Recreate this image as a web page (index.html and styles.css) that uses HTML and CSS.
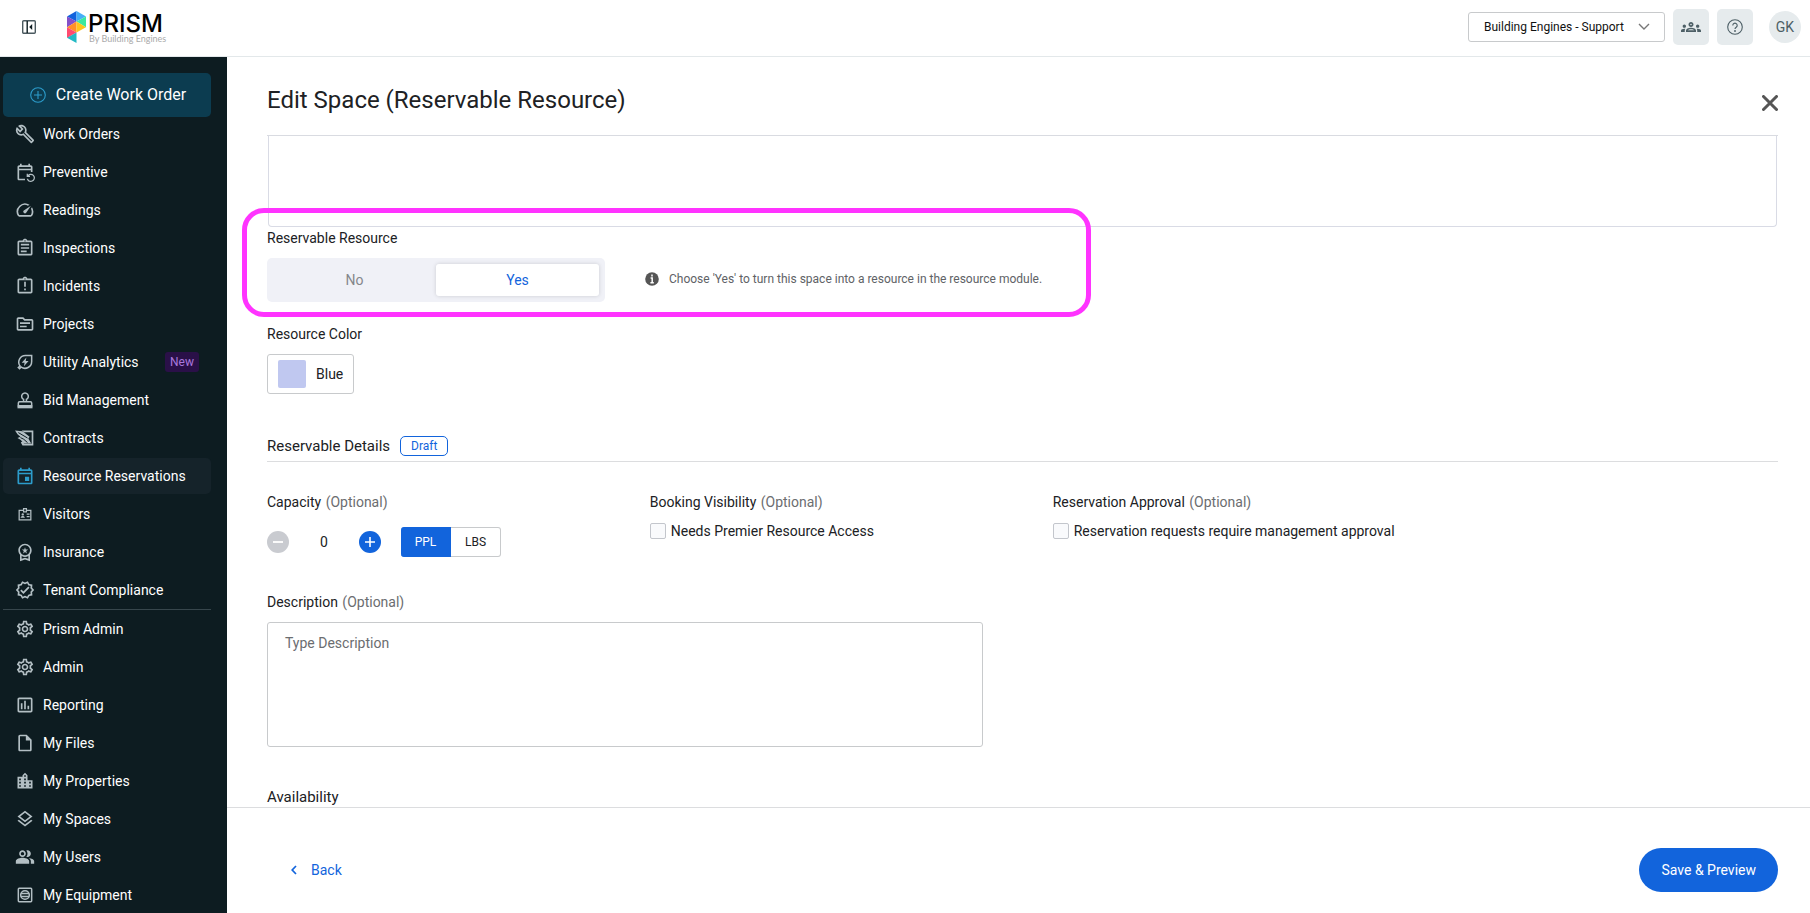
FILE: index.html
```html
<!DOCTYPE html>
<html lang="en">
<head>
  <meta charset="UTF-8" />
  <meta name="viewport" content="width=device-width, initial-scale=1" />
  <title>Prism - Edit Space</title>
  <link rel="stylesheet" href="styles.css">
</head>
<body>

  <header class="topbar">
    <button class="collapse-btn" aria-label="Collapse menu">
      <svg width="14" height="14" viewBox="0 0 14 14" fill="none" stroke="#4b5a60" stroke-width="1.4"><rect x=".7" y=".7" width="12.6" height="12.6" rx="1"/><path d="M5.2 1v12" stroke="#0d1c21"/><path d="M10.2 4v6L7.2 7z" fill="#0d1c21" stroke="none"/></svg>
    </button>
    <a href="#" class="logo">
      <svg width="19" height="32" viewBox="0 0 19 32">
        <path d="M9.500 0L0 5.500L9.500 10.500z" fill="#1263dd"/>
        <path d="M9.500 0L19 5.500L9.500 10.500z" fill="#46aef8"/>
        <path d="M0 5.500L9.500 10.500L0 16.300z" fill="#8450c8"/>
        <path d="M9.500 10.500L19 5.500V16.300z" fill="#3be8a0"/>
        <path d="M9.500 10.500L0 16.300L9.500 21.500z" fill="#ff9028"/>
        <path d="M9.500 10.500L19 16.300L9.500 21.500z" fill="#ffc41c"/>
        <path d="M0 16.300L9.500 21.500L0 27z" fill="#ff4b70"/>
        <path d="M9.500 21.500V32L0 26.800z" fill="#22b9c4"/>
      </svg>
      <span class="logo-text">
        <span class="logo-name">PRISM</span>
        <span class="logo-by">By Building Engines</span>
      </span>
    </a>
    <div class="topbar-right">
      <div class="account">
        <select class="account-select" aria-label="Account">
          <option>Building Engines - Support</option>
        </select>
        <svg class="account-arrow" width="12" height="8" viewBox="0 0 12 8" fill="none" stroke="#777" stroke-width="1.4"><path d="M1 1l5 5 5-5"/></svg>
      </div>
      <button class="icon-btn" aria-label="Tenants">
        <svg width="20" height="20" viewBox="0 0 24 24" fill="#4d5f66"><path d="M4 13c1.100 0 2-.9 2-2s-.9-2-2-2-2 .9-2 2 .9 2 2 2zm1.130 1.100C4.760 14.040 4.390 14 4 14c-.99 0-1.930.21-2.780.58C.48 14.900 0 15.620 0 16.430V18h4.500v-1.610c0-.83.23-1.610.63-2.290zM20 13c1.100 0 2-.9 2-2s-.9-2-2-2-2 .9-2 2 .9 2 2 2zm4 3.430c0-.81-.48-1.530-1.220-1.850C21.930 14.210 20.990 14 20 14c-.39 0-.76.04-1.130.1.400.68.630 1.460.630 2.290V18H24v-1.570zM16.240 13.650C15.070 13.130 13.630 12.750 12 12.750s-3.070.39-4.240.9C6.680 14.130 6 15.210 6 16.390V18h12v-1.610c0-1.180-.68-2.260-1.760-2.740zM8.070 16c.09-.23.13-.39.91-.69.97-.38 1.990-.56 3.020-.56s2.050.18 3.020.56c.77.3.81.46.91.69H8.070zM12 8c.55 0 1 .45 1 1s-.45 1-1 1-1-.45-1-1 .45-1 1-1m0-2c-1.660 0-3 1.340-3 3s1.340 3 3 3 3-1.340 3-3-1.340-3-3-3z"/></svg>
      </button>
      <button class="icon-btn" aria-label="Help">
        <svg width="16" height="16" viewBox="0 0 16 16" fill="none" stroke="#4d5f66" stroke-width="1.100"><circle cx="8" cy="8" r="7.300"/><path d="M5.800 6.400a2.200 2.200 0 1 1 3.400 1.800C8.300 8.800 8 9.100 8 10"/><circle cx="8" cy="12" r=".4"/></svg>
      </button>
      <button class="avatar">GK</button>
    </div>
  </header>

  <div class="layout">
    <aside class="sidebar">
      <button class="create-btn">
        <svg width="16" height="16" viewBox="0 0 16 16" fill="none" stroke="#2c9ccb" stroke-width="1.100"><circle cx="8" cy="8" r="7.300"/><path d="M8 4v8M4 8h8"/></svg>
        Create Work Order
      </button>
      <nav class="nav">
        <a href="#" class="nav-item"><svg class="nav-icon" viewBox="0 0 24 24"><path d="M22.610 18.990l-9.080-9.080c.93-2.340.45-5.100-1.440-7C9.790.61 6.210.4 3.660 2.260L7.500 6.110 6.080 7.520 2.250 3.690C.39 6.230.6 9.820 2.900 12.110c1.860 1.860 4.570 2.350 6.890 1.480l9.110 9.110c.39.39 1.020.39 1.410 0l2.300-2.300c.4-.38.4-1.010 0-1.410zm-3 1.600l-9.460-9.460c-.61.45-1.290.72-2 .82-1.360.2-2.790-.21-3.830-1.250C3.370 9.760 2.930 8.500 3 7.260l3.090 3.090 4.240-4.240-3.090-3.090c1.240-.07 2.490.37 3.440 1.310 1.080 1.080 1.490 2.570 1.240 3.960-.12.71-.42 1.370-.88 1.960l9.450 9.450-.88.89z"/></svg>Work Orders</a>
        <a href="#" class="nav-item"><svg class="nav-icon" viewBox="0 0 24 24"><path d="M21 12V6c0-1.100-.9-2-2-2h-1V2h-2v2H8V2H6v2H5c-1.100 0-2 .9-2 2v14c0 1.100.9 2 2 2h7v-2H5V10h14v2h2zM15.640 20c.43 1.450 1.770 2.500 3.360 2.500 1.930 0 3.500-1.570 3.500-3.500S20.930 15.500 19 15.500c-.95 0-1.820.38-2.450 1H18V18h-4v-4h1.500v1.430c.9-.88 2.140-1.430 3.500-1.430 2.760 0 5 2.240 5 5s-2.240 5-5 5c-2.420 0-4.440-1.720-4.900-4h1.540zM19 8H5V6h14v2z"/></svg>Preventive</a>
        <a href="#" class="nav-item"><svg class="nav-icon" viewBox="0 0 24 24"><path d="M20.380 8.570l-1.230 1.850a8 8 0 0 1-.22 7.580H5.070A8 8 0 0 1 15.580 6.850l1.850-1.230A10 10 0 0 0 3.350 19a2 2 0 0 0 1.720 1h13.850a2 2 0 0 0 1.740-1 10 10 0 0 0-.27-10.440zm-9.790 6.840a2 2 0 0 0 2.830 0l5.660-8.490-8.490 5.660a2 2 0 0 0 0 2.830z"/></svg>Readings</a>
        <a href="#" class="nav-item"><svg class="nav-icon" viewBox="0 0 24 24"><path d="M7 15h7v2H7zm0-4h10v2H7zm0-4h10v2H7zm12-4h-4.180C14.400 1.840 13.300 1 12 1s-2.400.84-2.820 2H5c-1.100 0-2 .9-2 2v14c0 1.100.9 2 2 2h14c1.100 0 2-.9 2-2V5c0-1.100-.9-2-2-2zm-7-.25c.41 0 .75.34.75.75s-.34.75-.75.75-.75-.34-.75-.75.34-.75.75-.75zM19 19H5V5h14v14z"/></svg>Inspections</a>
        <a href="#" class="nav-item"><svg class="nav-icon" viewBox="0 0 24 24"><path d="M11 15h2v2h-2zm0-8h2v6h-2zm8-4h-4.180C14.400 1.840 13.300 1 12 1s-2.400.84-2.820 2H5c-1.100 0-2 .9-2 2v14c0 1.100.9 2 2 2h14c1.100 0 2-.9 2-2V5c0-1.100-.9-2-2-2zm-7-.25c.41 0 .75.34.75.75s-.34.75-.75.75-.75-.34-.75-.75.34-.75.75-.75zM19 19H5V5h14v14z"/></svg>Incidents</a>
        <a href="#" class="nav-item"><svg class="nav-icon" viewBox="0 0 24 24"><path d="M20 6h-8l-2-2H4c-1.100 0-2 .9-2 2v12c0 1.100.9 2 2 2h16c1.100 0 2-.9 2-2V8c0-1.100-.9-2-2-2zm0 12H4V6h5.170l2 2H20v10zm-2-6H6v-2h12v2zm-4 4H6v-2h8v2z"/></svg>Projects</a>
        <a href="#" class="nav-item"><svg class="nav-icon" viewBox="0 0 24 24"><path d="M20 4.200v7.300a8 8 0 0 1-12.600 6.600L5.500 20 4 18.700l2-1.900A8 8 0 0 1 12.500 4.200z" fill="none" stroke="currentColor" stroke-width="1.800"/><path d="M13.700 6.500L8 12.800h3.500l-.8 4.400 5.600-6.300h-3.500z"/></svg>Utility Analytics<span class="badge-new">New</span></a>
        <a href="#" class="nav-item"><svg class="nav-icon" viewBox="0 0 24 24"><g fill="none" stroke="currentColor" stroke-width="1.800"><path d="M10.300 14v-2.800a4 4 0 1 1 3.400 0V14"/><path d="M4 19v-3.500c0-1 .6-1.500 1.500-1.500h13c.9 0 1.500.5 1.500 1.500V19z"/></g><path d="M3 18.500h18V22H3z"/></svg>Bid Management</a>
        <a href="#" class="nav-item"><svg class="nav-icon" viewBox="0 0 24 24"><path d="M8 3h14v18H9l-2-3.500 2-1.500 2 3h9V5H11z"/><path d="M0 3l9 1 8.500 6.500-1.500 2 3.500 6h-9l-3.500-4-4-2.500 3.500-1.500-3.500-3z"/><path d="M4 5.500l11 6.500M6.500 11.500l4 2 4.500 4" fill="none" stroke="#0d1c21" stroke-width="1.200"/></svg>Contracts</a>
        <a href="#" class="nav-item active"><svg class="nav-icon" viewBox="0 0 24 24"><path d="M19 4h-1V2h-2v2H8V2H6v2H5c-1.110 0-2 .9-2 2v14c0 1.100.89 2 2 2h14c1.100 0 2-.9 2-2V6c0-1.100-.9-2-2-2zm0 16H5V10h14v10zm0-12H5V6h14v2zm-7 5h5v5h-5z"/></svg>Resource Reservations</a>
        <a href="#" class="nav-item"><svg class="nav-icon" viewBox="0 0 24 24"><g fill="none" stroke="currentColor" stroke-width="1.500"><path d="M10 7.500H5V19h14V7.500h-5"/><path d="M10.300 9.500V5.500h3.400v4z"/><path d="M14 12h3.500M14 15h3.500"/></g><circle cx="9.300" cy="12.500" r="1.400"/><path d="M6.800 16.500c0-3 5-3 5 0z"/></svg>Visitors</a>
        <a href="#" class="nav-item"><svg class="nav-icon" viewBox="0 0 24 24"><path d="M9.680 13.690L12 11.930l2.310 1.760-.88-2.850L15.750 9h-2.840L12 6.190 11.090 9H8.250l2.310 1.840zM20 10c0-4.420-3.580-8-8-8s-8 3.580-8 8c0 2.030.76 3.870 2 5.280V23l6-2 6 2v-7.720c1.240-1.410 2-3.250 2-5.280zm-8-6c3.310 0 6 2.690 6 6s-2.690 6-6 6-6-2.690-6-6 2.690-6 6-6zm0 15l-4 1.020v-3.100c1.180.68 2.540 1.080 4 1.080s2.820-.4 4-1.080v3.100z"/></svg>Insurance</a>
        <a href="#" class="nav-item"><svg class="nav-icon" viewBox="0 0 24 24"><path d="M23 12l-2.440-2.790.34-3.690-3.610-.82-1.890-3.200L12 2.960 8.600 1.500 6.710 4.690 3.100 5.500l.34 3.700L1 12l2.440 2.790-.34 3.700 3.610.82L8.600 22.500l3.400-1.470 3.400 1.460 1.890-3.190 3.610-.82-.34-3.690L23 12zm-3.950 1.480l-.56.65.08.85.18 1.950-1.900.43-.84.19-.44.74-.99 1.680-1.780-.77-.8-.34-.79.34-1.780.77-.99-1.670-.44-.74-.84-.19-1.900-.43.180-1.960.08-.85-.56-.65L3.670 12l1.290-1.480.56-.65-.09-.86-.18-1.940 1.900-.43.840-.19.440-.74.990-1.680 1.780.77.800.34.790-.34 1.780-.77.990 1.680.44.740.84.190 1.900.43-.18 1.950-.08.850.56.650 1.290 1.470-1.280 1.490z"/><path d="M10.090 13.750l-2.320-2.330-1.480 1.490 3.800 3.810 7.340-7.360-1.480-1.490z"/></svg>Tenant Compliance</a>
        <hr class="nav-divider" />
        <a href="#" class="nav-item"><svg class="nav-icon" viewBox="0 0 24 24"><path id="gear" d="M19.430 12.980c.04-.32.07-.64.07-.98 0-.34-.03-.66-.07-.98l2.110-1.650c.19-.15.24-.42.12-.64l-2-3.460c-.09-.16-.26-.25-.44-.25-.06 0-.12.01-.17.03l-2.490 1c-.52-.4-1.080-.73-1.690-.98l-.38-2.650C14.460 2.180 14.250 2 14 2h-4c-.25 0-.46.18-.49.42l-.38 2.650c-.61.25-1.170.59-1.690.98l-2.490-1c-.06-.02-.12-.03-.18-.03-.17 0-.34.09-.43.25l-2 3.460c-.13.22-.07.49.12.64l2.110 1.650c-.04.32-.07.65-.07.98 0 .33.03.66.07.98l-2.110 1.650c-.19.15-.24.42-.12.64l2 3.460c.09.16.26.25.44.25.06 0 .12-.01.17-.03l2.490-1c.52.4 1.080.73 1.690.98l.38 2.650c.03.24.24.42.49.42h4c.25 0 .46-.18.49-.42l.38-2.650c.61-.25 1.170-.59 1.690-.98l2.490 1c.06.02.12.03.18.03.17 0 .34-.09.43-.25l2-3.460c.12-.22.07-.49-.12-.64l-2.110-1.650zm-1.980-1.710c.04.31.05.52.05.73 0 .21-.02.43-.05.73l-.14 1.130.89.7 1.080.84-.7 1.210-1.270-.51-1.040-.42-.9.68c-.43.32-.84.56-1.250.73l-1.060.43-.16 1.130-.2 1.350h-1.400l-.19-1.350-.16-1.130-1.060-.43c-.43-.18-.83-.41-1.230-.71l-.91-.7-1.060.43-1.270.51-.7-1.210 1.080-.84.89-.7-.14-1.130c-.03-.31-.05-.54-.05-.74s.02-.43.05-.73l.14-1.130-.89-.7-1.080-.84.7-1.210 1.270.51 1.040.42.9-.68c.43-.32.84-.56 1.250-.73l1.060-.43.160-1.130.2-1.350h1.390l.19 1.350.16 1.130 1.060.43c.43.180.83.410 1.230.71l.91.7 1.060-.43 1.270-.51.7 1.210-1.070.85-.89.7.14 1.130zM12 8c-2.210 0-4 1.790-4 4s1.790 4 4 4 4-1.790 4-4-1.790-4-4-4zm0 6c-1.100 0-2-.9-2-2s.9-2 2-2 2 .9 2 2-.9 2-2 2z"/></svg>Prism Admin</a>
        <a href="#" class="nav-item"><svg class="nav-icon" viewBox="0 0 24 24"><use href="#gear"/></svg>Admin</a>
        <a href="#" class="nav-item"><svg class="nav-icon" viewBox="0 0 24 24"><path d="M19 3H5c-1.100 0-2 .9-2 2v14c0 1.100.9 2 2 2h14c1.100 0 2-.9 2-2V5c0-1.100-.9-2-2-2zm0 16H5V5h14v14zM7 10h2v7H7zm4-3h2v10h-2zm4 6h2v4h-2z"/></svg>Reporting</a>
        <a href="#" class="nav-item"><svg class="nav-icon" viewBox="0 0 24 24"><path d="M14 2H6c-1.100 0-2 .9-2 2v16c0 1.100.89 2 1.990 2H18c1.100 0 2-.9 2-2V8l-6-6zM6 20V4h7v5h5v11H6z"/></svg>My Files</a>
        <a href="#" class="nav-item"><svg class="nav-icon" viewBox="0 0 24 24"><path d="M15 11V5l-3-3-3 3v2H3v14h18V11h-6zm-8 8H5v-2h2v2zm0-4H5v-2h2v2zm0-4H5V9h2v2zm6 8h-2v-2h2v2zm0-4h-2v-2h2v2zm0-4h-2V9h2v2zm0-4h-2V5h2v2zm6 12h-2v-2h2v2zm0-4h-2v-2h2v2z"/></svg>My Properties</a>
        <a href="#" class="nav-item"><svg class="nav-icon" viewBox="0 0 24 24"><path d="M11.990 18.540l-7.370-5.730L3 14.070l9 7 9-7-1.630-1.270-7.380 5.740zM12 16l7.360-5.730L21 9l-9-7-9 7 1.630 1.270L12 16zm0-11.470L17.740 9 12 13.470 6.260 9 12 4.530z"/></svg>My Spaces</a>
        <a href="#" class="nav-item"><svg class="nav-icon" viewBox="0 0 24 24"><path d="M16.670 13.130C18.040 14.060 19 15.320 19 17v3h4v-3c0-2.180-3.570-3.470-6.330-3.870zM15 12c2.210 0 4-1.790 4-4s-1.790-4-4-4c-.47 0-.91.1-1.330.24C14.500 5.270 15 6.580 15 8s-.5 2.730-1.330 3.760c.42.14.86.24 1.330.24zM9 12c2.210 0 4-1.790 4-4s-1.790-4-4-4-4 1.790-4 4 1.790 4 4 4zm0-6c1.100 0 2 .9 2 2s-.9 2-2 2-2-.9-2-2 .9-2 2-2zm0 7c-2.670 0-8 1.340-8 4v3h16v-3c0-2.660-5.330-4-8-4z"/></svg>My Users</a>
        <a href="#" class="nav-item"><svg class="nav-icon" viewBox="0 0 24 24"><g fill="none" stroke="currentColor" stroke-width="1.800"><rect x="4" y="4" width="16" height="16" rx="1"/><circle cx="12" cy="12" r="5.200"/><path d="M7 10.300h10M7 13.700h10"/></g></svg>My Equipment</a>
      </nav>
    </aside>

    <main class="main">
      <div class="page-head">
        <h1>Edit Space (Reservable Resource)</h1>
        <button class="close-btn" aria-label="Close">
          <svg width="16" height="16" viewBox="0 0 16 16" stroke="#555" stroke-width="3" stroke-linecap="round"><path d="M1.500 1.500l13 13M14.500 1.500l-13 13"/></svg>
        </button>
      </div>

      <form class="form-scroll">
        <div class="map-box"></div>

        <section class="reservable">
          <h2 class="label" id="resLabel">Reservable Resource</h2>
          <div class="reservable-row">
            <div class="toggle" role="group" aria-labelledby="resLabel">
              <button type="button" class="toggle-btn">No</button>
              <button type="button" class="toggle-btn selected">Yes</button>
            </div>
            <p class="hint">
              <svg width="14" height="14" viewBox="0 0 14 14"><circle cx="7" cy="7" r="6.800" fill="#555"/><path d="M7 2.600v1.800M5.600 6H7.200v4.600M5.400 10.700h3.400" fill="none" stroke="#fff" stroke-width="1.500"/></svg>
              Choose 'Yes' to turn this space into a resource in the resource module.
            </p>
          </div>
          <!-- pink outline around the reservable toggle -->
          <div class="highlight"></div>
        </section>

        <section class="color-field">
          <h2 class="label">Resource Color</h2>
          <button type="button" class="color-btn"><span class="swatch"></span>Blue</button>
        </section>

        <div class="section-head">
          <h2>Reservable Details</h2>
          <span class="draft">Draft</span>
        </div>

        <div class="details">
          <div class="field">
            <h3 class="label">Capacity <span class="optional">(Optional)</span></h3>
            <div class="capacity-row">
              <button type="button" class="round-btn disabled" aria-label="Decrease"><svg width="10" height="10" viewBox="0 0 10 10" stroke="#fff" stroke-width="1.800"><path d="M0 5h10"/></svg></button>
              <input class="count" type="text" value="0" aria-label="Capacity" />
              <button type="button" class="round-btn" aria-label="Increase"><svg width="10" height="10" viewBox="0 0 10 10" stroke="#fff" stroke-width="1.600"><path d="M0 5h10M5 0v10"/></svg></button>
              <div class="units">
                <button type="button" class="unit selected">PPL</button>
                <button type="button" class="unit">LBS</button>
              </div>
            </div>
          </div>
          <div class="field">
            <h3 class="label">Booking Visibility <span class="optional">(Optional)</span></h3>
            <label class="check"><input type="checkbox" />Needs Premier Resource Access</label>
          </div>
          <div class="field">
            <h3 class="label">Reservation Approval <span class="optional">(Optional)</span></h3>
            <label class="check"><input type="checkbox" />Reservation requests require management approval</label>
          </div>
        </div>

        <label class="label" for="description">Description <span class="optional">(Optional)</span></label>
        <textarea id="description" class="description" placeholder="Type Description"></textarea>

        <div class="section-head availability">
          <h2>Availability</h2>
        </div>
      </form>

      <footer class="footer">
        <button class="back-btn"><svg width="6" height="10" viewBox="0 0 6 10" fill="none" stroke="#1264dc" stroke-width="1.700"><path d="M5 1L1.200 5 5 9"/></svg>Back</button>
        <button class="save-btn">Save &amp; Preview</button>
      </footer>
    </main>
  </div>

</body>
</html>
```
FILE: styles.css
```css
* {
  margin: 0;
  padding: 0;
  box-sizing: border-box;
}

body {
  height: 100vh;
  display: flex;
  flex-direction: column;
  overflow: hidden;
  font-family: Roboto, sans-serif;
  font-size: 14px;
  line-height: 20px;
  color: #202124;
  background: #fff;
}

button, input, select, textarea {
  font: inherit;
  color: inherit;
}

button {
  display: flex;
  align-items: center;
  justify-content: center;
  background: none;
  border: none;
  cursor: pointer;
}

a {
  color: inherit;
  text-decoration: none;
}

h1, h2, h3 {
  font-weight: 400;
}

svg {
  flex: none;
}

/* Top bar */
.topbar {
  flex: none;
  display: flex;
  align-items: center;
  height: 57px;
  padding: 0 9px 2px 22px;
  border-bottom: 1px solid #e3e8ea;
}

.logo {
  display: flex;
  align-items: center;
  gap: 2px;
  margin-left: 31px;
}

.logo-text {
  display: flex;
  flex-direction: column;
  padding-top: 4px;
  font-family: Inter, sans-serif;
}

.logo-name {
  font-size: 24px;
  line-height: 20px;
  font-weight: 500;
  color: #000;
}

.logo-by {
  padding-left: 1px;
  font-family: Lato, sans-serif;
  font-size: 9px;
  line-height: 10px;
  color: #aaa;
}

.topbar-right {
  display: flex;
  align-items: center;
  gap: 8px;
  margin-left: auto;
}

.account {
  position: relative;
}

.account-select {
  appearance: none;
  width: 197px;
  height: 30px;
  padding: 0 15px;
  border: 1px solid #c8cacc;
  border-radius: 3px;
  background: #fff;
  font-size: 12px;
  color: #111;
}

.account-arrow {
  position: absolute;
  right: 15px;
  top: 11px;
  pointer-events: none;
}

.icon-btn {
  width: 36px;
  height: 36px;
  border-radius: 5px;
  background: #e6ebed;
}

.avatar {
  width: 32px;
  height: 32px;
  margin-left: 8px;
  border-radius: 50%;
  background: #e6ebed;
  color: #4d5f66;
}

/* Sidebar */
.layout {
  flex: 1;
  display: flex;
  min-height: 0;
}

.sidebar {
  flex: none;
  width: 227px;
  padding: 16px 16px 0 3px;
  overflow: hidden;
  background: #0d1c21;
  color: #fff;
}

.create-btn {
  position: relative;
  z-index: 1;
  width: 100%;
  height: 44px;
  margin-bottom: -2px;
  padding-left: 2px;
  gap: 10px;
  border-radius: 5px;
  background: #0c3c50;
  font-size: 16px;
}

.nav {
  display: flex;
  flex-direction: column;
}

.nav-item {
  display: flex;
  align-items: center;
  gap: 8px;
  height: 36px;
  margin: 1px 0;
  padding: 0 12px;
  border-radius: 5px;
}

.nav-item.active {
  background: #15232a;
}

.nav-icon {
  width: 20px;
  height: 20px;
  color: #b3bfc4;
  fill: currentColor;
}

.nav-item.active .nav-icon {
  color: #2c9ccb;
}

.badge-new {
  margin-left: auto;
  padding: 0 5px;
  border-radius: 3px;
  background: #2a1048;
  color: #a978dd;
  font-size: 12px;
}

.nav-divider {
  border: none;
  border-top: 1px solid #37464c;
}

/* Main area */
.main {
  flex: 1;
  display: flex;
  flex-direction: column;
  min-width: 0;
}

.page-head {
  flex: none;
  display: flex;
  align-items: center;
  justify-content: space-between;
  height: 79px;
  margin: 0 32px 0 40px;
  padding-top: 14px;
  border-bottom: 1px solid #d9dbe1;
}

.page-head h1 {
  padding-bottom: 6px;
  font-size: 24px;
  line-height: 32px;
}

.form-scroll {
  flex: 1;
  min-height: 0;
  padding: 0 32px 0 40px;
  overflow: hidden;
}

.map-box {
  height: 91px;
  margin: 0 1px;
  border: 1px solid #d9dbe5;
  border-top: none;
  border-radius: 0 0 4px 4px;
}

.reservable {
  position: relative;
  width: 840px;
  max-width: 100%;
}

.highlight {
  position: absolute;
  inset: -19px 16px -15px -25px;
  border: 5px solid #ff33ff;
  border-radius: 22px;
  pointer-events: none;
}

.label {
  display: block;
  font-size: 14px;
  line-height: 20px;
}

.optional {
  margin-left: 1px;
  color: #6b6d70;
}

.reservable .label {
  padding-top: 1px;
  margin-bottom: 10px;
}

.reservable-row {
  display: flex;
  align-items: center;
  gap: 40px;
}

.toggle {
  display: flex;
  width: 338px;
  height: 44px;
  padding: 6px;
  border-radius: 5px;
  background: #f0f1f7;
}

.toggle-btn {
  flex: 1;
  color: #85878c;
  border-radius: 3px;
}

.toggle-btn.selected {
  background: #fff;
  color: #1264dc;
  box-shadow: 0 0 4px rgba(0, 0, 0, 0.15);
}

.hint {
  display: flex;
  align-items: center;
  gap: 10px;
  padding-bottom: 2px;
  font-size: 12px;
  color: #606266;
}

.color-field {
  padding-top: 22px;
}

.color-btn {
  margin-top: 10px;
  height: 40px;
  padding: 0 10px;
  gap: 10px;
  border: 1px solid #c8cacc;
  border-radius: 3px;
}

.swatch {
  width: 28px;
  height: 28px;
  border-radius: 2px;
  background: #c0c8f0;
}

.section-head {
  display: flex;
  align-items: center;
  gap: 10px;
  margin-top: 42px;
  padding-bottom: 5px;
  border-bottom: 1px solid #dcdddf;
}

.section-head h2 {
  font-size: 15px;
}

.draft {
  padding: 0 10px;
  border: 1px solid #1264dc;
  border-radius: 5px;
  color: #1264dc;
  font-size: 12px;
  line-height: 18px;
}

.details {
  display: grid;
  grid-template-columns: 19fr 20fr 36fr;
  padding: 30px 0 35px;
}

.capacity-row {
  display: flex;
  align-items: center;
  margin-top: 15px;
}

.round-btn {
  width: 22px;
  height: 22px;
  border-radius: 50%;
  background: #1264dc;
}

.round-btn.disabled {
  background: #c9cbd0;
}

.count {
  width: 70px;
  border: none;
  text-align: center;
}

.units {
  display: flex;
  margin-left: 20px;
}

.unit {
  width: 50px;
  height: 30px;
  border: 1px solid #c8cacc;
  border-left: none;
  border-radius: 0 3px 3px 0;
  font-size: 12px;
}

.unit.selected {
  background: #1264dc;
  border-color: #1264dc;
  border-radius: 3px 0 0 3px;
  color: #fff;
}

.check {
  display: flex;
  align-items: center;
  gap: 5px;
  margin-top: 9px;
}

.check input {
  appearance: none;
  width: 16px;
  height: 16px;
  border: 1px solid #c3c6cc;
  border-radius: 2px;
  background: #f9fafc;
}

.description {
  display: block;
  width: 47.4%;
  height: 125px;
  margin-top: 10px;
  padding: 10px 17px;
  border: 1px solid #c8cacc;
  border-radius: 3px;
  resize: none;
}

.description::placeholder {
  color: #6b6d70;
}

.availability {
  margin-top: 40px;
}

/* Footer */
.footer {
  flex: none;
  display: flex;
  align-items: center;
  justify-content: space-between;
  height: 106px;
  padding: 18px 32px 0 64px;
  border-top: 1px solid #dcdddf;
}

.back-btn {
  gap: 14px;
  color: #1264dc;
}

.save-btn {
  height: 44px;
  padding: 0 22px;
  border-radius: 22px;
  background: #1264dc;
  color: #fff;
}
```
